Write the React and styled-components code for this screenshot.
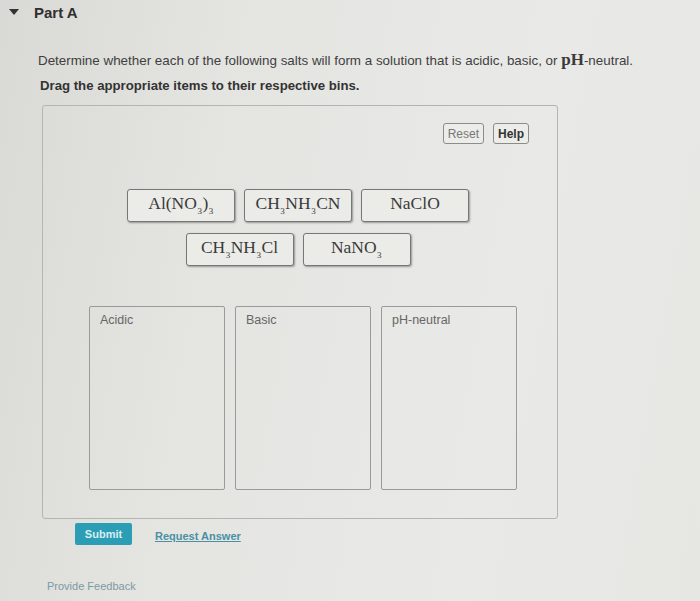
import React from 'react';
import styled, { createGlobalStyle } from 'styled-components';

const GlobalStyle = createGlobalStyle`
  html, body {
    margin: 0;
    padding: 0;
  }
  body {
    width: 700px;
    height: 601px;
    overflow: hidden;
    background: linear-gradient(100deg, #d9d9d6 0%, #e4e4e1 30%, #e9e9e7 70%, #e6e6e3 100%);
    font-family: "Liberation Sans", Arial, sans-serif;
    color: #333;
  }
`;

const Page = styled.div`
  position: relative;
  height: 601px;
`;

const Header = styled.div`
  display: flex;
  align-items: center;
  gap: 15px;
  padding: 3px 0 0 9px;
  height: 18px;
`;

const Caret = styled.span`
  width: 0;
  height: 0;
  border-left: 5px solid transparent;
  border-right: 5px solid transparent;
  border-top: 6px solid #333;
`;

const Title = styled.h2`
  margin: 0;
  font-size: 15px;
  font-weight: bold;
  color: #2f2f2f;
`;

const Body = styled.div`
  padding: 29px 0 0 38px;
`;

const Prompt = styled.p`
  margin: 0;
  font-size: 13.4px;
  color: #3f3f3f;
`;

const PH = styled.span`
  font-family: "Liberation Serif", "Times New Roman", serif;
  font-size: 17px;
  font-weight: bold;
  color: #3a3a3a;
`;

const Instruction = styled.p`
  margin: 8px 0 0 2px;
  font-size: 13.2px;
  font-weight: bold;
  color: #333;
`;

const Panel = styled.div`
  margin: 12px 0 0 4px;
  width: 516px;
  height: 414px;
  border: 1px solid #b4b4b2;
  border-radius: 3px;
  box-sizing: border-box;
  padding: 17px 28px 0 46px;
  display: flex;
  flex-direction: column;
`;

const Tools = styled.div`
  display: flex;
  justify-content: flex-end;
  gap: 9px;
`;

const ToolButton = styled.button`
  font-family: "Liberation Sans", Arial, sans-serif;
  font-size: 12px;
  font-weight: ${p => (p.$strong ? 'bold' : 'normal')};
  color: ${p => (p.$strong ? '#333' : '#777')};
  background: #ecece9;
  border: 1px solid #8c8c8a;
  border-radius: 3px;
  padding: 2px 4px;
  height: 21px;
`;

const Items = styled.div`
  margin-top: 45px;
  display: flex;
  flex-direction: column;
  align-items: center;
  gap: 11px;
  padding-right: 22px;
`;

const ItemRow = styled.div`
  display: flex;
  gap: 9px;
`;

const Chip = styled.div`
  width: 108px;
  height: 33px;
  box-sizing: border-box;
  border: 1px solid #777;
  border-radius: 3px;
  background: #ebebe8;
  box-shadow: 1px 1px 2px rgba(0, 0, 0, 0.35);
  display: flex;
  align-items: center;
  justify-content: center;
  font-family: "Liberation Serif", "Times New Roman", serif;
  font-size: 17.5px;
  color: #3a3a3a;
  padding-bottom: 4px;
`;

const Sub = styled.span`
  font-size: 9px;
  position: relative;
  top: 5px;
  margin: 0 0.5px;
`;

const Bins = styled.div`
  margin-top: 40px;
  display: flex;
  gap: 10px;
`;

const Bin = styled.div`
  width: 136px;
  height: 184px;
  box-sizing: border-box;
  border: 1px solid #9a9a98;
  border-radius: 2px;
  padding: 6px 10px;
  font-size: 12.5px;
  color: #666;
`;

const Actions = styled.div`
  display: flex;
  align-items: center;
  gap: 23px;
  margin: 4px 0 0 37px;
`;

const Submit = styled.button`
  font-family: "Liberation Sans", Arial, sans-serif;
  font-size: 11px;
  font-weight: bold;
  color: #d9eef3;
  background: #2b9db5;
  border: none;
  border-radius: 2px;
  width: 57px;
  height: 22px;
`;

const RequestLink = styled.a`
  font-size: 11px;
  font-weight: bold;
  color: #4a8fa3;
  text-decoration: underline;
  margin-top: 3px;
`;

const Feedback = styled.div`
  margin: 35px 0 0 9px;
  font-size: 11px;
  color: #7c9aa4;
`;

const items = [
  [
    ['Al(NO', '3', ')', '3'],
    ['CH', '3', 'NH', '3', 'CN'],
    ['NaClO'],
  ],
  [
    ['CH', '3', 'NH', '3', 'Cl'],
    ['NaNO', '3'],
  ],
];

const Formula = ({ parts }) => (
  <span>
    {parts.map((p, i) => (i % 2 === 1 ? <Sub key={i}>{p}</Sub> : <span key={i}>{p}</span>))}
  </span>
);

const App = () => (
  <Page>
    <GlobalStyle />
    <Header>
      <Caret />
      <Title>Part A</Title>
    </Header>
    <Body>
      <Prompt>
        Determine whether each of the following salts will form a solution that is acidic, basic, or <PH>pH</PH>-neutral.
      </Prompt>
      <Instruction>Drag the appropriate items to their respective bins.</Instruction>
      <Panel>
        <Tools>
          <ToolButton>Reset</ToolButton>
          <ToolButton $strong>Help</ToolButton>
        </Tools>
        <Items>
          {items.map((row, r) => (
            <ItemRow key={r}>
              {row.map((parts, i) => (
                <Chip key={i}>
                  <Formula parts={parts} />
                </Chip>
              ))}
            </ItemRow>
          ))}
        </Items>
        <Bins>
          <Bin>Acidic</Bin>
          <Bin>Basic</Bin>
          <Bin>pH-neutral</Bin>
        </Bins>
      </Panel>
      <Actions>
        <Submit>Submit</Submit>
        <RequestLink>Request Answer</RequestLink>
      </Actions>
      <Feedback>Provide Feedback</Feedback>
    </Body>
  </Page>
);

export default App;
